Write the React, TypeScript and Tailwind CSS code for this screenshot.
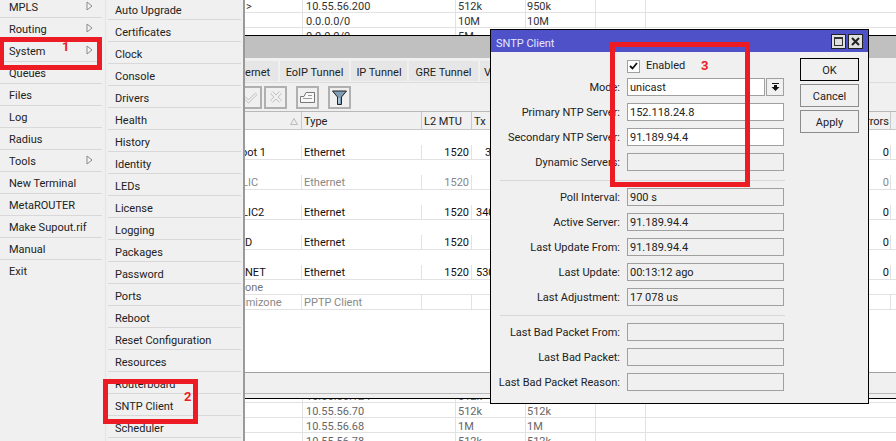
const FONT = "[font-family:Roboto,sans-serif]";

const mainMenu = [
  { label: "MPLS", arrow: true },
  { label: "Routing", arrow: true },
  { label: "System", arrow: true },
  { label: "Queues" },
  { label: "Files" },
  { label: "Log" },
  { label: "Radius" },
  { label: "Tools", arrow: true },
  { label: "New Terminal" },
  { label: "MetaROUTER" },
  { label: "Make Supout.rif" },
  { label: "Manual" },
  { label: "Exit" },
];

const systemMenu = [
  "Auto Upgrade", "Certificates", "Clock", "Console", "Drivers", "Health", "History",
  "Identity", "LEDs", "License", "Logging", "Packages", "Password", "Ports", "Reboot",
  "Reset Configuration", "Resources", "Routerboard", "SNTP Client", "Scheduler",
];

// queue list behind the windows, 15px rows
const queueRows: Record<number, string[]> = {
  0: [">", "10.55.56.200", "512k", "950k"],
  1: ["", "0.0.0.0/0", "10M", "10M"],
  2: ["", "0.0.0.0/0", "5M", ""],
  26: ["", "10.55.56.124", "512k", "512k"],
  27: ["", "10.55.56.70", "512k", "512k"],
  28: ["", "10.55.56.68", "1M", "1M"],
  29: ["", "10.55.56.78", "512k", "512k"],
};

// names run in under the system menu, nameShift is how much of each is hidden
const ifaceRows = [
  { comment: "" , name: "oot 1", nameShift: "-ml-[4px]", type: "Ethernet", mtu: "1520", tx: "3", txPad: "pl-[13px]", errors: "0" },
  { comment: "", name: "LIC", nameShift: "-ml-[3px]", type: "Ethernet", mtu: "1520", tx: "", txPad: "", errors: "0", muted: true },
  { comment: "", name: "LIC2", nameShift: "-ml-[3px]", type: "Ethernet", mtu: "1520", tx: "340", txPad: "pl-[4px]", errors: "0" },
  { comment: "", name: "D", nameShift: "", type: "Ethernet", mtu: "1520", tx: "", txPad: "", errors: "0" },
  { comment: "", name: "NET", nameShift: "", type: "Ethernet", mtu: "1520", tx: "530", txPad: "pl-[4px]", errors: "0" },
  { comment: "one", name: "lmizone", nameShift: "-ml-[2px]", type: "PPTP Client", mtu: "", tx: "", txPad: "", errors: "", muted: true },
];

function SubArrow() {
  return (
    <svg width="7" height="10" viewBox="0 0 7 10" className="absolute right-[9px] top-[5px]">
      <path d="M1 1 L6 5 L1 9 Z" fill="#f4f4f4" stroke="#8a8a8a" />
    </svg>
  );
}

function MainMenu() {
  return (
    <div className="w-[105px] shrink-0 -mt-[4px] pr-[3px] bg-[#f0f0f0] h-[445px]">
      {mainMenu.map((item) => (
        <div key={item.label} className="relative h-[22px] pl-[9px] pt-[1px] leading-[22px] border-b border-[#d8d8d8] last:border-0 text-[#222]">
          {item.label}
          {item.arrow && <SubArrow />}
        </div>
      ))}
    </div>
  );
}

function SystemMenu() {
  return (
    <div className="w-[140px] shrink-0 -mt-[2px] h-[443px] bg-[#f0f0f0] border-r-2 border-[#9a9a9a] pl-[2px] pr-[2px] border-l border-l-[#e4e4e4]">
      {systemMenu.map((label) => (
        <div key={label} className="h-[22px] pl-[7px] pt-[2px] leading-[22px] border-b border-[#d8d8d8] text-[#222]">
          {label}
        </div>
      ))}
    </div>
  );
}

function QueueList() {
  const rows = Array.from({ length: 30 }, (_, i) => i);
  return (
    <div className="flex-1 -mt-[2px] h-[443px] overflow-hidden bg-white">
      {rows.map((i) => {
        const cells = queueRows[i] ?? ["", "", "", ""];
        return (
          <div key={i} className={`flex h-[15px] leading-[17px] border-b border-[#e2e2e2] ${i > 20 ? "text-[#666]" : "text-[#333]"}`}>
            <div className="w-[58px] pl-[1px] border-r border-[#e2e2e2]">{cells[0]}</div>
            <div className="w-[153px] pl-[3px] border-r border-[#e2e2e2]">{cells[1]}</div>
            <div className="w-[70px] pl-[2px] border-r border-[#e2e2e2]">{cells[2]}</div>
            <div className="w-[70px] pl-[1px] border-r border-[#e2e2e2]">{cells[3]}</div>
            <div className="w-[50px] border-r border-[#e2e2e2]" />
          </div>
        );
      })}
    </div>
  );
}

function ToolButton({ children, className = "" }: { children: React.ReactNode; className?: string }) {
  return (
    <div className={`w-[23px] h-[23px] shrink-0 flex items-center justify-center border-2 border-[#b0b0b0] bg-[#f0f0f0] ${className}`}>
      {children}
    </div>
  );
}

function InterfaceWindow() {
  return (
    <div className="absolute left-[245px] top-[35px] right-0 h-[364px] flex flex-col overflow-hidden bg-[#f0f0f0] border-y border-black">
      <div className="h-[22px] shrink-0 bg-[#c0c0c0]" />

      <div className="h-[25px] shrink-0 flex gap-[2px] pt-[3px] pb-[1px] text-[#222] border-b border-[#dcdcdc]">
        <div className="w-[33px] bg-[#e6e6e6] leading-[24px] overflow-hidden">
          <span className="block -ml-[6px]">hernet</span>
        </div>
        <div className="w-[69px] bg-[#e6e6e6] leading-[24px] text-center">EoIP Tunnel</div>
        <div className="w-[56px] bg-[#e6e6e6] leading-[24px] text-center">IP Tunnel</div>
        <div className="w-[69px] bg-[#e6e6e6] leading-[24px] text-center">GRE Tunnel</div>
        <div className="w-[30px] bg-[#e6e6e6] leading-[24px] pl-[4px]">VLAN</div>
      </div>

      <div className="h-[29px] shrink-0 flex items-center -ml-[6px] border-b border-[#b8b8b8]">
        <ToolButton>
          <svg width="15" height="13" viewBox="0 0 15 13" fill="none">
            <path d="M1.5 6.5 L5.5 10.5 L13.5 2.5" stroke="#bdbdbd" strokeWidth="3" />
            <path d="M1.5 6.5 L5.5 10.5 L13.5 2.5" stroke="#f4f4f4" strokeWidth="1.4" />
          </svg>
        </ToolButton>
        <ToolButton className="ml-[2px]">
          <svg width="14" height="14" viewBox="0 0 14 14" fill="none">
            <path d="M2.5 2.5 L11.5 11.5 M11.5 2.5 L2.5 11.5" stroke="#bdbdbd" strokeWidth="3.6" />
            <path d="M2.5 2.5 L11.5 11.5 M11.5 2.5 L2.5 11.5" stroke="#f4f4f4" strokeWidth="1.8" />
          </svg>
        </ToolButton>
        <ToolButton className="ml-[9px]">
          <svg width="15" height="11" viewBox="0 0 15 11" fill="#f8f8f8" stroke="#777">
            <path d="M.5 4.5 H4 L6 .5 H14.5 V10.5 H.5 Z" />
            <path d="M8 3.5 H12 M3 6.5 H12" fill="none" stroke="#999" />
          </svg>
        </ToolButton>
        <ToolButton className="ml-[9px]">
          <svg width="15" height="15" viewBox="0 0 15 15" stroke="#222">
            <path d="M.5 1 H14.5 L9.5 7 V14.5 H5.5 V7 Z" fill="#7f9db5" />
            <path d="M7 8 V13.5" stroke="#dfe8ef" />
          </svg>
        </ToolButton>
      </div>

      <div className="h-[18px] shrink-0 flex leading-[19px] text-[#222] border-b border-[#c8c8c8] bg-[#f0f0f0]">
        <div className="relative w-[57px] border-r border-[#c8c8c8]">
          <svg width="8" height="7" viewBox="0 0 8 7" className="absolute right-[3px] top-[6px]">
            <path d="M4 .5 L7.5 6.5 H.5 Z" fill="#eee" stroke="#bbb" />
          </svg>
        </div>
        <div className="w-[120px] pl-[2px] border-r border-[#c8c8c8]">Type</div>
        <div className="w-[50px] pl-[2px] border-r border-[#c8c8c8]">L2 MTU</div>
        <div className="w-[60px] pl-[2px]">Tx</div>
        <div className="flex-1" />
        <div className="w-[25px] text-right pr-[5px] border-r border-[#c8c8c8]">rrors</div>
        <div className="w-[5px]" />
      </div>

      <div className="flex-1 bg-white">
        {ifaceRows.map((row) => (
          <div key={row.name}>
            <div className={`h-[15px] leading-[15px] text-[#777] ${row.comment ? "border-b border-[#e2e2e2]" : ""}`}>{row.comment}</div>
            <div className={`flex h-[15px] leading-[15px] border-b border-[#e2e2e2] ${row.muted ? "text-[#888]" : "text-[#111]"}`}>
              <div className="w-[57px] overflow-hidden border-r border-[#e2e2e2]">
                <span className={`block ${row.nameShift}`}>{row.name}</span>
              </div>
              <div className="w-[120px] pl-[2px] border-r border-[#e2e2e2]">{row.type}</div>
              <div className="w-[50px] pr-[2px] text-right border-r border-[#e2e2e2]">{row.mtu}</div>
              <div className={`w-[60px] ${row.txPad}`}>{row.tx}</div>
              <div className="flex-1" />
              <div className="w-[25px] text-right pr-[1px] border-r border-[#e2e2e2]">{row.errors}</div>
              <div className="w-[5px]" />
            </div>
          </div>
        ))}
      </div>

      <div className="h-[21px] shrink-0 bg-[#f0f0f0] border-t border-[#a0a0a0]" />
      <div className="h-[5px] shrink-0 bg-[#f0f0f0] border-t border-[#b8b8b8]" />
    </div>
  );
}

function Field({ label, value, editable }: { label: string; value?: string; editable?: boolean }) {
  return (
    <div className="flex h-[18px] items-center text-[#222]">
      <div className="w-[130px] pr-[1px] pt-[2px] text-right whitespace-nowrap">{label}:</div>
      <div className={`ml-[6px] w-[157px] h-[18px] leading-[18px] pl-[2px] border border-[#a0a0a0] ${editable ? "bg-white" : "bg-[#f0f0f0]"}`}>
        {value}
      </div>
    </div>
  );
}

function DialogButton({ label, primary }: { label: string; primary?: boolean }) {
  return (
    <div className={`w-[59px] h-[23px] leading-[23px] text-center text-[#222] bg-[#f0f0f0] border ${primary ? "border-black" : "border-[#8c8c8c]"}`}>
      {label}
    </div>
  );
}

function SntpDialog() {
  return (
    <div className="absolute left-[490px] top-[29px] w-[379px] h-[375px] flex flex-col bg-[#f0f0f0] border border-black">
      <div className="h-[22px] shrink-0 flex items-center bg-[#4f51c9] pl-[5px] pr-[5px] text-[#e6e6ff]">
        <span className="flex-1 pt-[6px]">SNTP Client</span>
        <div className="w-[15px] h-[15px] flex items-center justify-center bg-[#e0e0e0] border border-[#222]">
          <div className="w-[9px] h-[9px] border border-[#333] border-t-2" />
        </div>
        <div className="w-[15px] h-[15px] ml-[2px] flex items-center justify-center bg-[#e0e0e0] border border-[#222]">
          <svg width="9" height="9" viewBox="0 0 9 9" stroke="#222" strokeWidth="2">
            <path d="M1 1 L8 8 M8 1 L1 8" />
          </svg>
        </div>
      </div>

      <div className="flex-1 flex">
        <div className="w-[294px] shrink-0 flex flex-col">
          <div className="h-[26px] flex items-center pl-[136px] pt-[2px] text-[#222]">
            <div className="w-[13px] h-[13px] flex items-center justify-center bg-white border border-[#a0a0a0]">
              <svg width="9" height="8" viewBox="0 0 9 8" fill="none" stroke="#111" strokeWidth="1.8">
                <path d="M1 4 L3.5 6.5 L8 1" />
              </svg>
            </div>
            <span className="ml-[6px]">Enabled</span>
          </div>

          <div className="flex h-[18px] items-center text-[#222]">
            <div className="w-[130px] pr-[1px] pt-[2px] text-right">Mode:</div>
            <div className="ml-[6px] w-[138px] h-[18px] leading-[18px] pl-[2px] bg-white border border-[#a0a0a0]">unicast</div>
            <div className="ml-[1px] w-[18px] h-[18px] flex items-center justify-center bg-[#f0f0f0] border border-[#a0a0a0]">
              <svg width="9" height="9" viewBox="0 0 9 9" fill="#111">
                <path d="M1 0 H8 V1 H1 Z M3 2 H6 V4 H8.5 L4.5 8 L.5 4 H3 Z" />
              </svg>
            </div>
          </div>

          <div className="flex flex-col gap-[7px] mt-[7px]">
            <Field label="Primary NTP Server" value="152.118.24.8" editable />
            <Field label="Secondary NTP Server" value="91.189.94.4" editable />
            <Field label="Dynamic Servers" />
          </div>

          <div className="ml-[9px] mt-[9px] mb-[7px] h-px bg-[#d8d8d8]" />

          <div className="flex flex-col gap-[7px]">
            <Field label="Poll Interval" value="900 s" />
            <Field label="Active Server" value="91.189.94.4" />
            <Field label="Last Update From" value="91.189.94.4" />
            <Field label="Last Update" value="00:13:12 ago" />
            <Field label="Last Adjustment" value="17 078 us" />
          </div>

          <div className="ml-[9px] mt-[9px] mb-[7px] h-px bg-[#d8d8d8]" />

          <div className="flex flex-col gap-[7px]">
            <Field label="Last Bad Packet From" />
            <Field label="Last Bad Packet" />
            <Field label="Last Bad Packet Reason" />
          </div>
        </div>

        <div className="ml-[15px] pt-[6px] flex flex-col gap-[3px]">
          <DialogButton label="OK" primary />
          <DialogButton label="Cancel" />
          <DialogButton label="Apply" />
        </div>
      </div>
    </div>
  );
}

// red markup painted over the screenshot
function Annotations() {
  return (
    <>
      <div className="absolute left-0 top-[37px] w-[102px] h-[33px] border-[5px] border-l-[4px] border-[#ed1c24]" />
      <span className="absolute left-[62px] top-[39px] text-[13px] leading-[16px] font-bold text-[#ed1c24]">1</span>
      <div className="absolute left-[103px] top-[379px] w-[95px] h-[45px] border-[5px] border-[#ed1c24]" />
      <span className="absolute left-[184px] top-[389px] text-[13px] leading-[16px] font-bold text-[#ed1c24]">2</span>
      <div className="absolute left-[610px] top-[42px] w-[140px] h-[145px] border-[5px] border-[#ed1c24]" />
      <span className="absolute left-[701px] top-[58px] text-[13px] leading-[16px] font-bold text-[#ed1c24]">3</span>
    </>
  );
}

export default function App() {
  return (
    <div className={`relative w-[896px] h-[441px] overflow-hidden flex bg-white text-[11px] ${FONT}`}>
      <MainMenu />
      <SystemMenu />
      <QueueList />
      <InterfaceWindow />
      <SntpDialog />
      <Annotations />
    </div>
  );
}
